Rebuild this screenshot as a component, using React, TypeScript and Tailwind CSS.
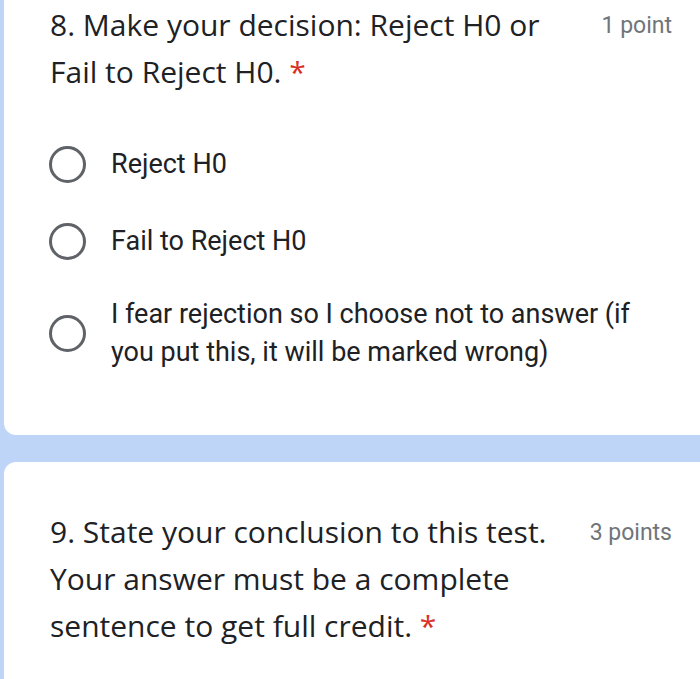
const options = [
  "Reject H0",
  "Fail to Reject H0",
  "I fear rejection so I choose not to answer (if you put this, it will be marked wrong)",
];

function Radio() {
  return <span className="block w-[37px] h-[37px] shrink-0 rounded-full border-[3.5px] border-[#5f6368]" />;
}

function Title({ lines, points }: { lines: string; points: string }) {
  return (
    <div className="flex items-start">
      <h2 className="w-[524px] font-[family-name:'Open_Sans',sans-serif] text-[30px] leading-[47px] text-[#202124]">
        {lines} <span className="text-[#d93025]">*</span>
      </h2>
      <span className="ml-auto mt-[10px] text-[23px] leading-[30px] text-[#70757a]">{points}</span>
    </div>
  );
}

export default function App() {
  return (
    <div className="h-[679px] overflow-hidden bg-[#bfd5f7] pl-[4px] font-[family-name:Roboto,sans-serif]">
      <section className="bg-white rounded-bl-[12px] pl-[46px] pr-[28px] pt-[1px] pb-[64px]">
        <Title lines="8. Make your decision: Reject H0 or Fail to Reject H0." points="1 point" />
        <ul className="mt-[50px] flex flex-col">
          {options.map((o, i) => (
            <li
              key={o}
              className={
                "flex items-center gap-[25px] -ml-[1px] " + (i === 1 ? "mt-[39px]" : i === 2 ? "mt-[35px]" : "")
              }
            >
              <Radio />
              <span className="text-[27px] leading-[38px] text-[#202124]">{o}</span>
            </li>
          ))}
        </ul>
      </section>
      <section className="mt-[27px] bg-white rounded-tl-[12px] pl-[46px] pr-[28px] pt-[46px] h-[300px]">
        <Title
          lines="9. State your conclusion to this test. Your answer must be a complete sentence to get full credit."
          points="3 points"
        />
      </section>
    </div>
  );
}
